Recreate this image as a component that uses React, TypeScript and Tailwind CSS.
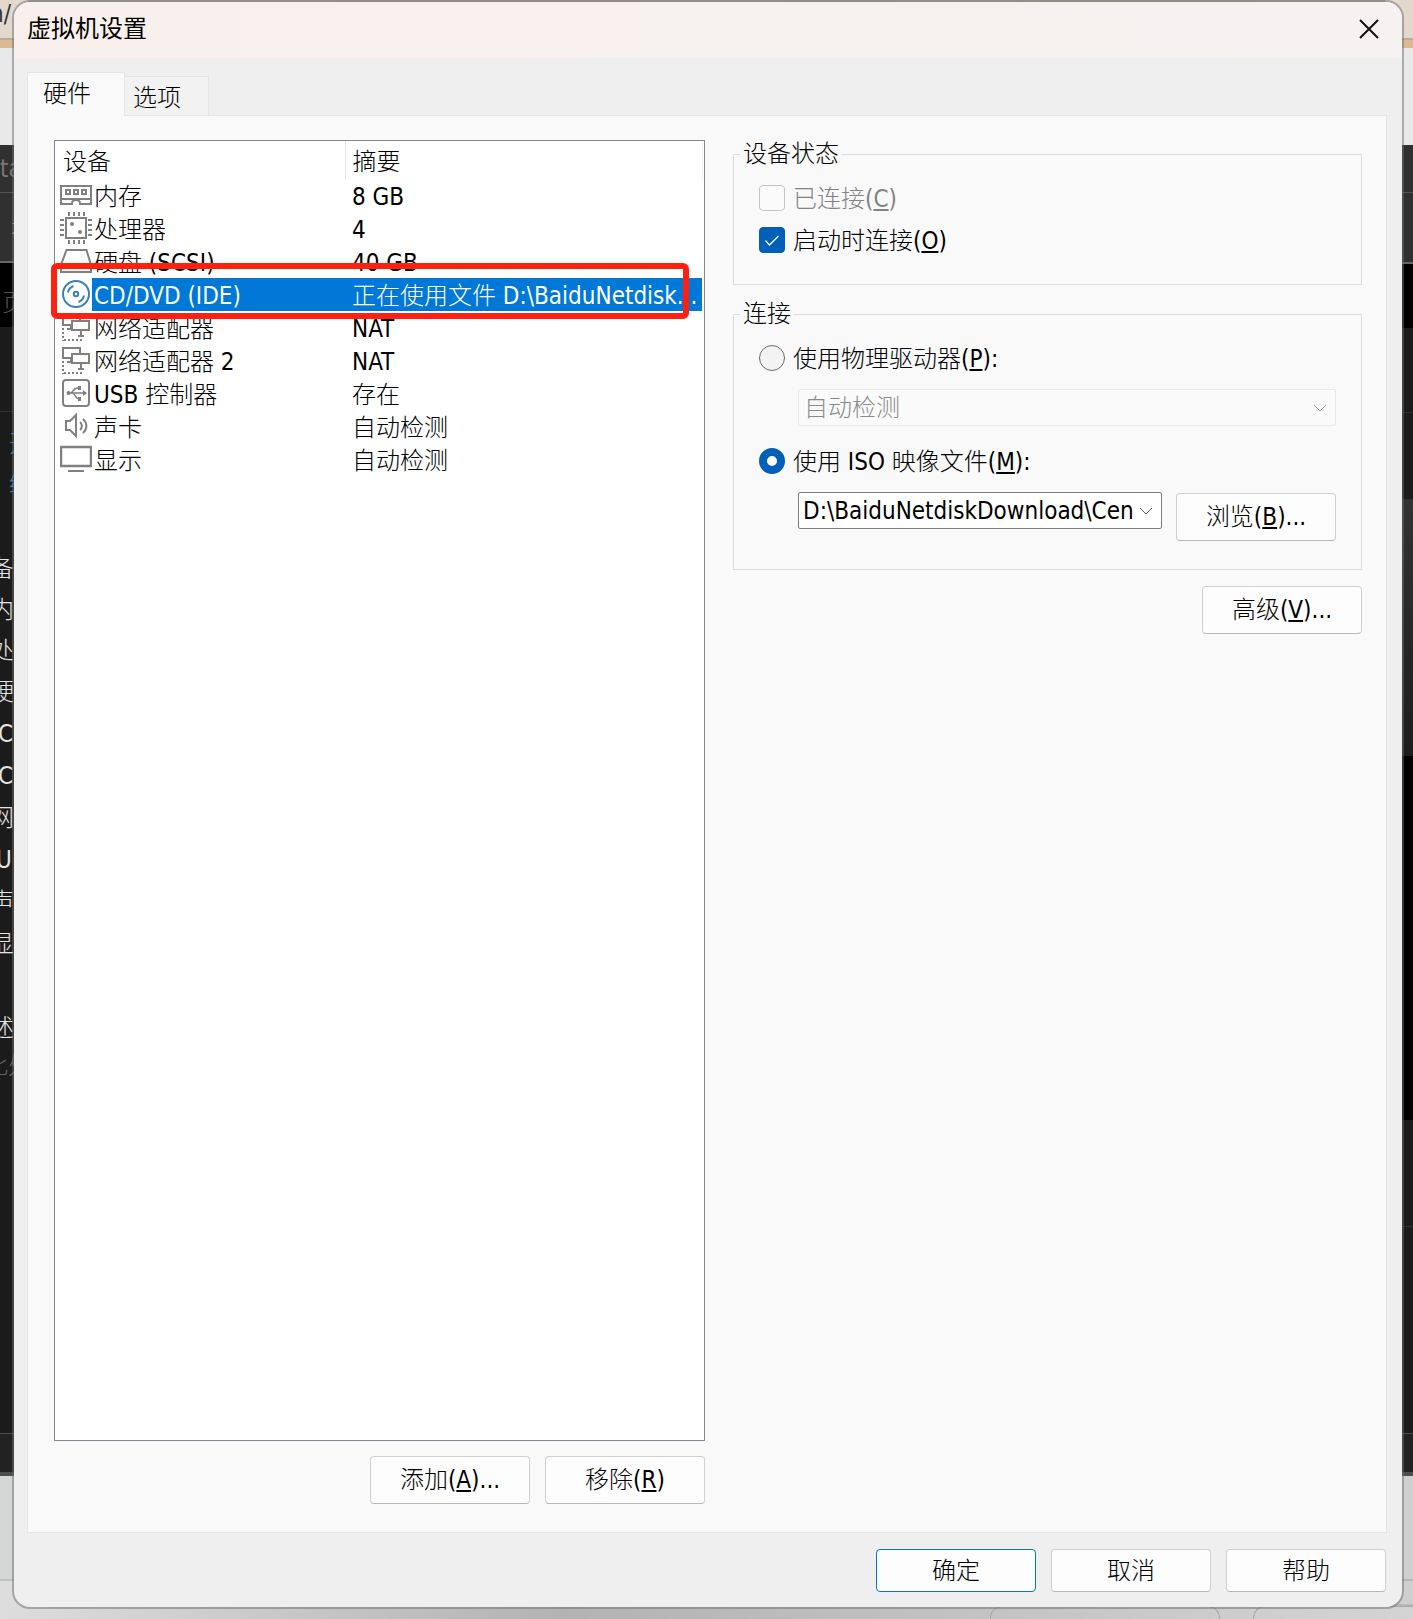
import { useState } from 'react'
import type { ReactNode } from 'react'

interface Device {
  id: string
  name: string
  summary: string
  icon: ReactNode
}

const iconProps = {
  width: 32,
  height: 32,
  viewBox: '0 0 32 32',
  fill: 'none',
  stroke: 'currentColor',
  strokeWidth: 2,
  className: 'block',
}

const MemoryIcon = () => (
  <svg {...iconProps}>
    <path d="M1 7h30v18H20v-1a4 3 0 0 0-8 0v1H1z" />
    <path d="M1 20h30" />
    <path d="M6 11h4v4H6zM14 11h4v4h-4zM22 11h4v4h-4z" />
  </svg>
)

const CpuIcon = () => (
  <svg {...iconProps}>
    <path d="M6 6h20v20H6z" />
    <path d="M9 0v4M14 0v4M19 0v4M24 0v4M9 28v4M14 28v4M19 28v4M24 28v4" />
    <path d="M0 8h4M0 13h4M0 18h4M0 23h4M28 8h4M28 13h4M28 18h4M28 23h4" />
    <circle cx="12" cy="12" r="2" fill="currentColor" stroke="none" />
    <circle cx="20" cy="20" r="2" fill="currentColor" stroke="none" />
  </svg>
)

const DiskIcon = () => (
  <svg {...iconProps}>
    <path d="M6.500 5h20L31 20v7H1v-7z" />
    <path d="M1 20h30" />
  </svg>
)

const DiscIcon = () => (
  <svg {...iconProps} className="block text-[#3f80b5]">
    <circle cx="16" cy="16" r="13" />
    <circle cx="16" cy="16" r="2.200" />
    <path d="M8 14.500A8.500 8.500 0 0 1 13.500 8M24 17.500A8.500 8.500 0 0 1 18.500 24" />
  </svg>
)

const NetworkIcon = () => (
  <svg {...iconProps}>
    <path d="M11 14H3V4h17v5M7 18h5M11 14v4" />
    <path d="M12 10h17v9H12zM21 19v6M18 25h6" />
    <path d="M3 17v13M4 29h18" strokeDasharray="2 2" />
  </svg>
)

const UsbIcon = () => (
  <svg {...iconProps}>
    <rect x="3" y="3" width="26" height="26" rx="3" />
    <path d="M7 16h17M10 16c4 0 2-5 8-5M12 16c4 0 2 6 8 6" strokeWidth={1.5} />
    <circle cx="8.500" cy="16" r="2" fill="currentColor" stroke="none" />
    <path d="M18 9h3v4h-3zM18 20h3v4h-3zM23 13l4 3-4 3z" fill="currentColor" stroke="none" />
  </svg>
)

const SoundIcon = () => (
  <svg {...iconProps}>
    <path d="M6 11h4l6-6v21l-6-6H6z" />
    <path d="M20 12c2.500 2 2.500 6 0 8M23 9c4.500 4 4.500 10 0 14" />
  </svg>
)

const DisplayIcon = () => (
  <svg {...iconProps}>
    <path d="M1 4h30v19H1z" strokeWidth={2.5} />
    <path d="M8 28h16" />
  </svg>
)

const devices: Device[] = [
  { id: 'memory', name: '内存', summary: '8 GB', icon: <MemoryIcon /> },
  { id: 'cpu', name: '处理器', summary: '4', icon: <CpuIcon /> },
  { id: 'disk', name: '硬盘 (SCSI)', summary: '40 GB', icon: <DiskIcon /> },
  { id: 'cd', name: 'CD/DVD (IDE)', summary: '正在使用文件 D:\\BaiduNetdisk...', icon: <DiscIcon /> },
  { id: 'net1', name: '网络适配器', summary: 'NAT', icon: <NetworkIcon /> },
  { id: 'net2', name: '网络适配器 2', summary: 'NAT', icon: <NetworkIcon /> },
  { id: 'usb', name: 'USB 控制器', summary: '存在', icon: <UsbIcon /> },
  { id: 'sound', name: '声卡', summary: '自动检测', icon: <SoundIcon /> },
  { id: 'display', name: '显示', summary: '自动检测', icon: <DisplayIcon /> },
]

function PushButton({ children, className = '' }: { children: ReactNode; className?: string }) {
  return (
    <button
      type="button"
      className={`w-40 shrink-0 rounded border bg-[#fdfdfd] text-center hover:bg-[#e0eef9] ${className}`}
    >
      {children}
    </button>
  )
}

const plainButton = 'h-12 border-[#d0d0d0] border-b-[#b9b9b9]'

function Chevron({ className }: { className: string }) {
  return (
    <svg
      width="14"
      height="8"
      viewBox="0 0 14 8"
      fill="none"
      stroke="currentColor"
      className={`pointer-events-none absolute top-[15px] right-[9px] ${className}`}
    >
      <path d="M1 1l6 6 6-6" />
    </svg>
  )
}

// Windows that stay visible around the dialog's edges
function Backdrop() {
  return (
    <div className="flex flex-col overflow-hidden bg-[#b5aca1] leading-6 whitespace-nowrap [grid-area:1/1]">
      <div className="flex grow justify-between">
        <div className="flex w-7 flex-col">
          <div className="-ml-2.5 h-[38px] bg-[#e2d9cc] pt-0.5 text-[#333333]">n/</div>
          <div className="h-0.5 bg-[#b5aca1]" />
          <div className="h-2 bg-[#dcb992]" />
          <div className="h-[97px] bg-[#e9e9e9]" />
          <div className="h-12 border-b border-[#555555] bg-[#303030] pt-3 text-[#777777]">ta</div>
          <div className="h-[70px] border-b-2 border-[#666666] bg-[#303030] pt-5 pl-[11px] text-[#b8c4dc]">米</div>
          <div className="h-16 bg-black pt-7 pl-0.5 text-[#555555]">页</div>
          <div className="h-[85px] border-b border-[#333333] bg-[#1b1b1b]" />
          <div className="flex grow flex-col bg-[#1b1b1b] text-[#e4e4e4]">
            <span className="mt-5 h-10 pl-[9px] text-[#3c82c0]">开</span>
            <span className="h-[85px] pl-[9px] text-[#3c82c0]">给</span>
            <span className="-ml-2.5 h-[41px]">备</span>
            <span className="-ml-2.5 h-[41px]">内</span>
            <span className="-ml-2.5 h-[41px]">处</span>
            <span className="-ml-2.5 h-[42px]">硬</span>
            <span className="-ml-0.5 h-[42px]">C</span>
            <span className="-ml-0.5 h-[42px]">C</span>
            <span className="-ml-2.5 h-[42px]">网</span>
            <span className="-ml-1 h-[42px]">U</span>
            <span className="-ml-2.5 h-[42px]">声</span>
            <span className="-ml-2.5 h-[84px]">显</span>
            <span className="-ml-2.5 h-[38px]">述</span>
            <span className="-ml-4 text-[#666666]">此处</span>
          </div>
          <div className="h-[43px] border-t border-b-4 border-[#4d4d4d] bg-[#222222]" />
          <div className="h-[105px] border-b-2 border-[#bfc2c0] bg-[#d3d6d4]" />
          <div className="h-[25px] bg-[#dddddd]" />
        </div>
        <div className="flex w-7 flex-col">
          <div className="h-[38px] bg-[#e2d9cc]" />
          <div className="h-0.5 bg-[#b5aca1]" />
          <div className="h-2 bg-[#dcb992]" />
          <div className="h-[97px] bg-[#e9e9e9]" />
          <div className="h-12 border-b border-[#555555] bg-[#303030]" />
          <div className="h-[71px] border-b-2 border-[#666666] bg-[#303030]" />
          <div className="h-16 bg-black" />
          <div className="h-[85px] border-b border-[#333333] bg-[#1b1b1b]" />
          <div className="h-[86px] bg-[#1b1b1b]" />
          <div className="h-[257px] bg-linear-to-b from-[#333333] to-[#1d1d1d]" />
          <div className="h-[364px] bg-black" />
          <div className="h-[107px] border-b border-[#333333] bg-[#1b1b1b]" />
          <div className="grow bg-[#1b1b1b]" />
          <div className="h-[43px] border-t border-b-4 border-[#4d4d4d] bg-[#222222]" />
          <div className="h-[105px] border-b-2 border-[#b8b8b8] bg-[#cfcfcf]" />
          <div className="h-[25px] border-b-2 border-[#b8b8b8] bg-[#cfcfcf]" />
        </div>
      </div>
      <div className="flex h-[13px] justify-end gap-[33px] bg-linear-to-r from-[#dddddd] via-[#b3b3b3] via-40% to-[#d4d4d4]">
        <div className="w-[230px] rounded-t-xl border border-b-0 border-[#a6a6a6]" />
        <div className="w-40 rounded-tl-xl border border-r-0 border-b-0 border-[#a6a6a6]" />
      </div>
    </div>
  )
}

export default function App() {
  const [selectedId, setSelectedId] = useState('cd')
  const [source, setSource] = useState('iso')
  const [connectAtStart, setConnectAtStart] = useState(true)

  const boxClass = 'peer size-[26px] shrink-0 appearance-none border'
  const radioClass = `${boxClass} rounded-full border-[#6b6b6b] bg-[#f3f3f3] checked:border-8 checked:border-[#005fb8] checked:bg-white`

  return (
    <div className="grid min-h-screen font-['DejaVu_Sans_Condensed','Noto_Sans_CJK_SC',sans-serif] text-2xl leading-7 font-light text-black">
      <Backdrop />

      <div className="mt-0.5 mr-[11px] mb-3 ml-3.5 flex flex-col overflow-hidden rounded-2xl bg-[#efefef] shadow-[0_0_0_2px_rgba(110,110,110,0.5)] [grid-area:1/1]">
        {/* Title bar */}
        <header className="flex h-14 items-center justify-between bg-linear-to-r from-[#f9f0ed] to-[#f5f2f1] pr-[23px] pb-0.5 pl-[13px]">
          <h1 className="font-normal">虚拟机设置</h1>
          <button type="button" aria-label="关闭">
            <svg width="20" height="20" viewBox="0 0 20 20" fill="none" stroke="#111111" strokeWidth="2">
              <path d="M1 1l18 18M19 1L1 19" />
            </svg>
          </button>
        </header>

        {/* Tabs */}
        <div role="tablist" className="flex items-end pt-3.5 pl-[13px]">
          <button
            type="button"
            role="tab"
            aria-selected="true"
            className="relative -mb-px h-11 w-[98px] border border-b-0 border-[#e5e5e5] bg-[#f9f9f9] pb-0.5 pl-[15px] text-left"
          >
            硬件
          </button>
          <button
            type="button"
            role="tab"
            aria-selected="false"
            className="h-[39px] w-[84px] border border-b-0 border-l-0 border-[#e5e5e5] bg-[#f2f2f2] pt-1 pl-2 text-left"
          >
            选项
          </button>
        </div>

        <main className="mr-[15px] ml-[13px] grid grow grid-cols-[651fr_629fr] gap-7 border border-[#e5e5e5] bg-[#f9f9f9] pt-6 pr-6 pb-7 pl-[26px]">
          {/* Device list */}
          <section className="flex min-w-0 flex-col gap-[15px]">
            <div className="relative grow border border-[#828790] bg-white">
              <table className="w-full table-fixed text-left whitespace-nowrap">
                <colgroup>
                  <col className="w-[37px]" />
                  <col className="w-[253px]" />
                  <col />
                  <col className="w-0.5" />
                </colgroup>
                <thead>
                  <tr className="h-[38px]">
                    <th colSpan={2} className="border-r border-[#e5e5e5] p-0 pt-1 pl-2 font-light">
                      设备
                    </th>
                    <th className="border-r border-[#f0f0f0] p-0 pt-1 pl-[7px] font-light">摘要</th>
                    <th className="p-0" />
                  </tr>
                </thead>
                <tbody>
                  {devices.map((device) => {
                    const selected = device.id === selectedId
                    const cell = selected ? 'bg-[#0078d7] text-white' : ''
                    return (
                      <tr key={device.id} className="h-[33px]" onClick={() => setSelectedId(device.id)}>
                        <td className="p-0 pl-[5px] align-top text-[#808080]">{device.icon}</td>
                        <td className={`p-0 pt-0.5 pl-0.5 ${cell}`}>{device.name}</td>
                        <td className={`overflow-hidden p-0 pt-0.5 pl-[7px] ${cell}`}>{device.summary}</td>
                        <td className="p-0" />
                      </tr>
                    )
                  })}
                </tbody>
              </table>
              {/* Highlight frame around the CD/DVD row */}
              <div className="pointer-events-none absolute top-[122px] right-[15px] -left-1 h-14 rounded-md border-6 border-[#ff2010]" />
            </div>
            <div className="flex justify-end gap-[15px]">
              <PushButton className={plainButton}>
                添加(<u>A</u>)...
              </PushButton>
              <PushButton className={plainButton}>
                移除(<u>R</u>)
              </PushButton>
            </div>
          </section>

          {/* Settings of the selected device */}
          <section className="flex min-w-0 flex-col">
            <fieldset className="flex flex-col gap-4 border border-[#dcdcdc] pt-[17px] pr-[25px] pb-[31px] pl-[25px]">
              <legend className="-ml-[19px] px-[3px]">设备状态</legend>
              <label className="flex h-[26px] items-center gap-2 text-[#838383]">
                <input type="checkbox" disabled className={`${boxClass} rounded border-[#c4c4c4] bg-[#fbfbfb]`} />
                <span className="pt-0.5">
                  已连接(<u>C</u>)
                </span>
              </label>
              <label className="relative flex h-[26px] items-center gap-2">
                <input
                  type="checkbox"
                  checked={connectAtStart}
                  onChange={(e) => setConnectAtStart(e.target.checked)}
                  className={`${boxClass} rounded border-[#838383] checked:border-[#005fb8] checked:bg-[#005fb8]`}
                />
                <svg
                  width="26"
                  height="26"
                  viewBox="0 0 26 26"
                  fill="none"
                  stroke="white"
                  className="pointer-events-none absolute top-0 left-0 hidden peer-checked:block"
                >
                  <path d="M6.500 13.500l4 4.500 9-9" strokeWidth="1.300" />
                </svg>
                <span className="pt-0.5">
                  启动时连接(<u>O</u>)
                </span>
              </label>
            </fieldset>

            <fieldset className="mt-[15px] border border-[#dcdcdc] pt-[17px] pr-[25px] pb-7 pl-[25px]">
              <legend className="-ml-[19px] px-[3px]">连接</legend>
              <label className="flex h-[26px] items-center gap-2">
                <input
                  type="radio"
                  name="source"
                  checked={source === 'physical'}
                  onChange={() => setSource('physical')}
                  className={radioClass}
                />
                <span className="pt-0.5">
                  使用物理驱动器(<u>P</u>):
                </span>
              </label>
              <div className="relative mt-[18px] ml-[39px]">
                <select
                  aria-label="物理驱动器"
                  disabled={source !== 'physical'}
                  className="block h-[37px] w-full appearance-none rounded-xs border border-[#e8e8e8] bg-[#fafafa] pl-[5px] text-black disabled:text-[#8a8a8a] disabled:opacity-100"
                >
                  <option>自动检测</option>
                </select>
                <Chevron className="text-[#a5a5a5]" />
              </div>
              <label className="mt-[22px] flex h-[26px] items-center gap-2">
                <input
                  type="radio"
                  name="source"
                  checked={source === 'iso'}
                  onChange={() => setSource('iso')}
                  className={radioClass}
                />
                <span className="pt-0.5">
                  使用 ISO 映像文件(<u>M</u>):
                </span>
              </label>
              <div className="mt-[18px] ml-[39px] flex items-start gap-3.5">
                <div className="relative min-w-0 grow">
                  <select
                    aria-label="ISO 映像文件"
                    className="block h-[37px] w-full appearance-none rounded-xs border border-[#7d7d7d] bg-white pr-6 pl-1"
                  >
                    <option>D:\BaiduNetdiskDownload\Cen</option>
                  </select>
                  <Chevron className="text-[#555555]" />
                </div>
                <PushButton className={`mt-px ${plainButton}`}>
                  浏览(<u>B</u>)...
                </PushButton>
              </div>
            </fieldset>

            <PushButton className={`mt-4 self-end ${plainButton}`}>
              高级(<u>V</u>)...
            </PushButton>
          </section>
        </main>

        <footer className="flex justify-end gap-[15px] pt-4 pr-4 pb-[15px]">
          <PushButton className="h-[43px] border-[#0078d4]">确定</PushButton>
          <PushButton className="h-[43px] border-[#d0d0d0] border-b-[#b9b9b9]">取消</PushButton>
          <PushButton className="h-[43px] border-[#d0d0d0] border-b-[#b9b9b9]">帮助</PushButton>
        </footer>
      </div>
    </div>
  )
}
